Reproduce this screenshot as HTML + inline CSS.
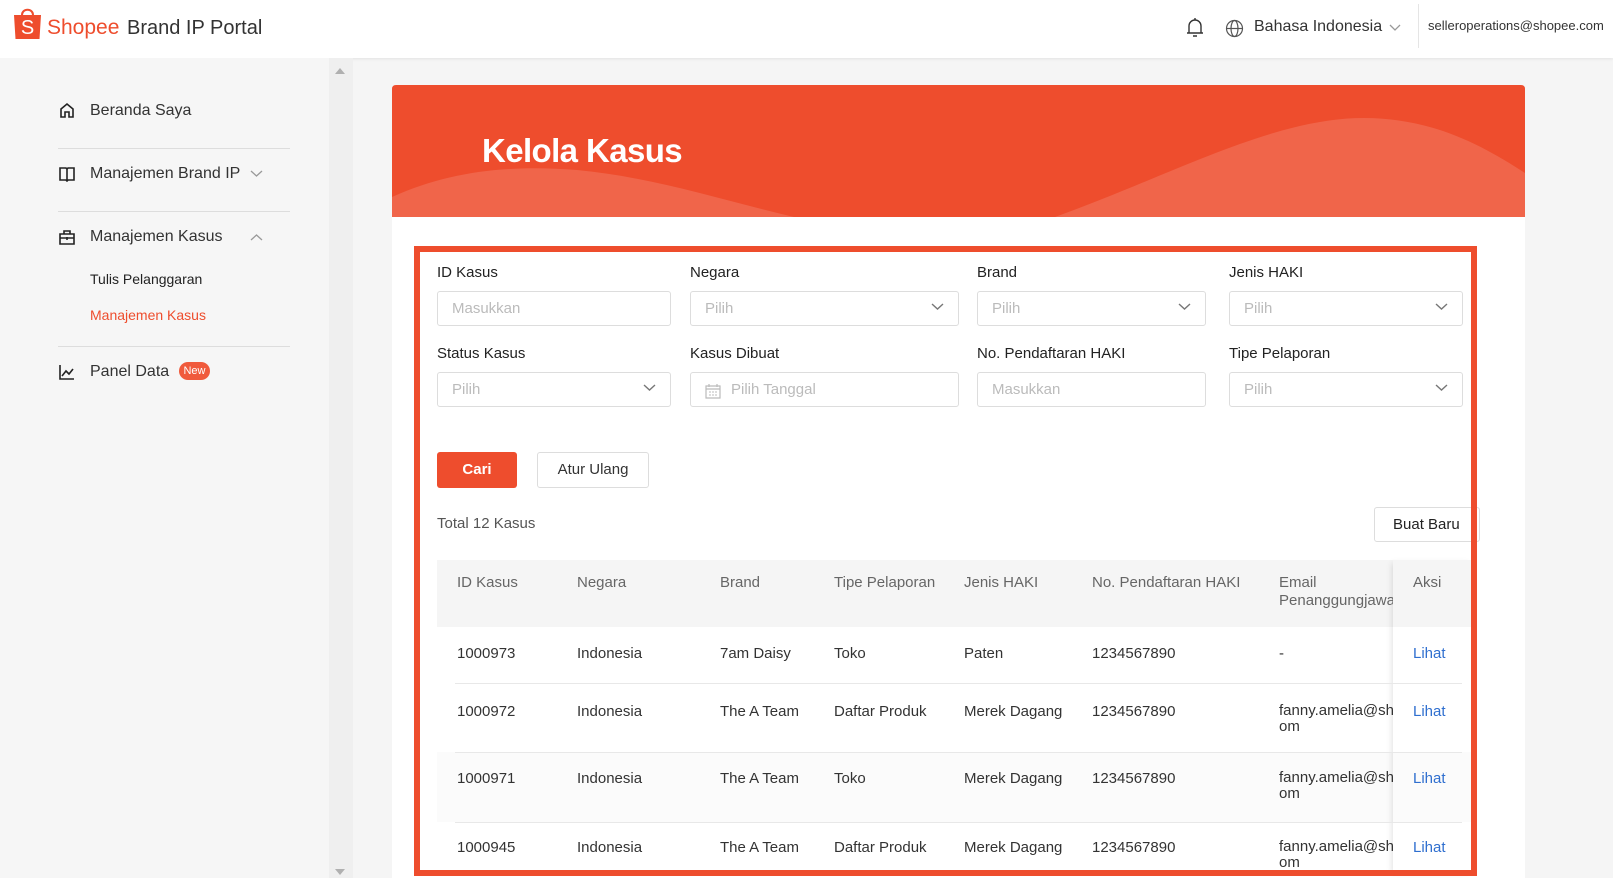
<!DOCTYPE html>
<html><head><meta charset="utf-8"><style>
*{margin:0;padding:0;box-sizing:border-box}
body{width:1613px;height:878px;overflow:hidden;background:#f5f5f5;font-family:"Liberation Sans",Arial,sans-serif;color:#333;position:relative}
.a{position:absolute;white-space:nowrap}
.hdr{left:0;top:0;width:1613px;height:58px;background:#fff;box-shadow:0 1px 3px rgba(0,0,0,.08)}
.side{left:0;top:58px;width:329px;height:820px;background:#f6f6f6}
.sb{left:329px;top:58px;width:24px;height:820px;background:#efefef}
.nav{font-size:16px;color:#333}
.hr{height:1px;background:#ddd;left:58px;width:232px}
.lbl{font-size:15px;color:#222}
.inp{border:1px solid #ddd;border-radius:3px;background:#fff;height:35px;font-size:15px;color:#bbb;padding:0 14px;line-height:33px}
.chev{position:absolute;right:14px;top:11px}
.th{font-size:15px;color:#666}
.td{font-size:15px;color:#333}
.rl{height:1px;background:#e8e8e8;left:455px;width:1007px}
.lk{font-size:15px;color:#2f6fcf}
</style></head><body>
<div class="a hdr"></div>
<svg class="a" style="left:13px;top:6px" width="29" height="34" viewBox="0 0 29 34"><path d="M9 9 C9 2 20 2 20 9" fill="none" stroke="#ee4d2d" stroke-width="2"/><path d="M1 9 H28 L26.5 33 H2.5 Z" fill="#ee4d2d"/><text x="14.5" y="28" text-anchor="middle" font-family="Liberation Sans" font-size="20" fill="#fff">S</text></svg>
<div class="a" style="left:47px;top:16px;font-size:21px;color:#ee4d2d">Shopee</div>
<div class="a" style="left:127px;top:17px;font-size:20px;color:#333">Brand IP Portal</div>
<svg class="a" style="left:1186px;top:17px" width="18" height="22" viewBox="0 0 18 22"><path d="M3 16 V9 A6 6 0 0 1 15 9 V16 H17 H1 Z M7 19 H11" fill="none" stroke="#333" stroke-width="1.4"/><path d="M9 1 V3" stroke="#333" stroke-width="1.4"/></svg>
<svg class="a" style="left:1225px;top:19px" width="19" height="19" viewBox="0 0 19 19"><g fill="none" stroke="#555" stroke-width="1.2"><circle cx="9.5" cy="9.5" r="8"/><ellipse cx="9.5" cy="9.5" rx="3.5" ry="8"/><path d="M1.5 9.5 H17.5"/></g></svg>
<div class="a" style="left:1254px;top:18px;font-size:16px;color:#333">Bahasa Indonesia</div>
<svg class="a" style="left:1389px;top:24px" width="12" height="8" viewBox="0 0 12 8"><path d="M1 1 L6 6 L11 1" fill="none" stroke="#999" stroke-width="1.3"/></svg>
<div class="a" style="left:1418px;top:4px;width:1px;height:44px;background:#e5e5e5"></div>
<div class="a" style="left:1428px;top:18px;font-size:13px;color:#333">selleroperations@shopee.com</div>

<div class="a side"></div>
<div class="a sb"></div>
<svg class="a" style="left:334px;top:67px" width="12" height="8"><path d="M1 7 L6 1 L11 7Z" fill="#b0b0b0"/></svg>
<svg class="a" style="left:334px;top:868px" width="12" height="8"><path d="M1 1 L6 7 L11 1Z" fill="#b0b0b0"/></svg>

<svg class="a" style="left:59px;top:102px" width="16" height="16" viewBox="0 0 16 16"><path d="M2 15 V7 L8 2 L14 7 V15 H10 V10 H6 V15 Z" fill="none" stroke="#222" stroke-width="1.6"/></svg>
<div class="a nav" style="left:90px;top:102px">Beranda Saya</div>
<div class="a hr" style="top:148px"></div>
<svg class="a" style="left:59px;top:166px" width="16" height="16" viewBox="0 0 16 16"><path d="M1 2 H7 L8 3 L9 2 H15 V14 H9 L8 15 L7 14 H1 Z M8 3 V14" fill="none" stroke="#222" stroke-width="1.6"/></svg>
<div class="a nav" style="left:90px;top:165px">Manajemen Brand IP</div>
<svg class="a" style="left:250px;top:170px" width="13" height="8"><path d="M1 1 L6.5 6 L12 1" fill="none" stroke="#999" stroke-width="1.3"/></svg>
<div class="a hr" style="top:211px"></div>
<svg class="a" style="left:59px;top:229px" width="16" height="16" viewBox="0 0 16 16"><path d="M1 5 H15 V15 H1 Z M5 5 V2 H11 V5 M1 9 H15 M8 8 V11" fill="none" stroke="#222" stroke-width="1.6"/></svg>
<div class="a nav" style="left:90px;top:228px">Manajemen Kasus</div>
<svg class="a" style="left:250px;top:233px" width="13" height="8"><path d="M1 7 L6.5 2 L12 7" fill="none" stroke="#999" stroke-width="1.3"/></svg>
<div class="a" style="left:90px;top:271px;font-size:14px;color:#222">Tulis Pelanggaran</div>
<div class="a" style="left:90px;top:307px;font-size:14px;color:#ee4d2d">Manajemen Kasus</div>
<div class="a hr" style="top:346px"></div>
<svg class="a" style="left:59px;top:364px" width="16" height="16" viewBox="0 0 16 16"><path d="M1 1 V15 H15 M3 12 L7 7 L10 10 L14 5" fill="none" stroke="#222" stroke-width="1.6"/></svg>
<div class="a nav" style="left:90px;top:363px">Panel Data</div>
<div class="a" style="left:179px;top:362px;width:31px;height:18px;border-radius:9px;background:#f05a3c;color:#fff;font-size:11px;line-height:18px;text-align:center">New</div>

<div class="a" style="left:392px;top:85px;width:1133px;height:793px;background:#fff;border-radius:4px 4px 0 0"></div>
<svg class="a" style="left:392px;top:85px" width="1133" height="132" viewBox="0 0 1133 132"><path d="M4 0 H1129 Q1133 0 1133 4 V132 H0 V4 Q0 0 4 0Z" fill="#ee4d2d"/><path d="M0 112 C60 85 120 80 185 85 C260 92 330 115 402 132 H0Z" fill="#f0654a"/><path d="M663 132 C780 90 880 33 972 33 C1040 33 1090 60 1133 88 V132Z" fill="#f0654a"/></svg>
<div class="a" style="left:482px;top:132px;font-size:33px;font-weight:bold;color:#fff;letter-spacing:-0.6px">Kelola Kasus</div>

<div class="a lbl" style="left:437px;top:264px">ID Kasus</div>
<div class="a lbl" style="left:690px;top:264px">Negara</div>
<div class="a lbl" style="left:977px;top:264px">Brand</div>
<div class="a lbl" style="left:1229px;top:264px">Jenis HAKI</div>
<div class="a inp" style="left:437px;top:291px;width:234px">Masukkan</div>
<div class="a inp" style="left:690px;top:291px;width:269px">Pilih<svg class="chev" width="13" height="8"><path d="M1 1 L6.5 6 L12 1" fill="none" stroke="#777" stroke-width="1.4"/></svg></div>
<div class="a inp" style="left:977px;top:291px;width:229px">Pilih<svg class="chev" width="13" height="8"><path d="M1 1 L6.5 6 L12 1" fill="none" stroke="#777" stroke-width="1.4"/></svg></div>
<div class="a inp" style="left:1229px;top:291px;width:234px">Pilih<svg class="chev" width="13" height="8"><path d="M1 1 L6.5 6 L12 1" fill="none" stroke="#777" stroke-width="1.4"/></svg></div>

<div class="a lbl" style="left:437px;top:345px">Status Kasus</div>
<div class="a lbl" style="left:690px;top:345px">Kasus Dibuat</div>
<div class="a lbl" style="left:977px;top:345px">No. Pendaftaran HAKI</div>
<div class="a lbl" style="left:1229px;top:345px">Tipe Pelaporan</div>
<div class="a inp" style="left:437px;top:372px;width:234px">Pilih<svg class="chev" width="13" height="8"><path d="M1 1 L6.5 6 L12 1" fill="none" stroke="#777" stroke-width="1.4"/></svg></div>
<div class="a inp" style="left:690px;top:372px;width:269px;padding-left:40px">Pilih Tanggal<svg style="position:absolute;left:14px;top:10px" width="16" height="16" viewBox="0 0 16 16"><path d="M1 3 H15 V15 H1 Z M1 6 H15 M4 1 V4 M12 1 V4" fill="none" stroke="#bbb" stroke-width="1.2"/><path d="M4 9h2M7 9h2M10 9h2M4 12h2M7 12h2M10 12h2" stroke="#bbb"/></svg></div>
<div class="a inp" style="left:977px;top:372px;width:229px">Masukkan</div>
<div class="a inp" style="left:1229px;top:372px;width:234px">Pilih<svg class="chev" width="13" height="8"><path d="M1 1 L6.5 6 L12 1" fill="none" stroke="#777" stroke-width="1.4"/></svg></div>

<div class="a" style="left:437px;top:452px;width:80px;height:36px;background:#ee4d2d;border-radius:3px;color:#fff;font-size:15px;font-weight:bold;text-align:center;line-height:36px">Cari</div>
<div class="a" style="left:537px;top:452px;width:112px;height:36px;border:1px solid #ddd;border-radius:3px;background:#fff;color:#333;font-size:15px;text-align:center;line-height:34px">Atur Ulang</div>
<div class="a" style="left:437px;top:515px;font-size:15px;color:#555">Total 12 Kasus</div>
<div class="a" style="left:1374px;top:507px;width:106px;height:35px;border:1px solid #ddd;border-radius:3px;background:#fff;color:#222;font-size:15px;line-height:33px;padding-left:18px">Buat Baru</div>

<div class="a" style="left:437px;top:560px;width:1038px;height:67px;background:#f5f5f5"></div>
<div class="a" style="left:437px;top:752px;width:1038px;height:70px;background:#fbfbfb"></div>
<div class="a" style="left:1393px;top:560px;width:82px;height:316px;box-shadow:-4px 0 6px -3px rgba(0,0,0,.12);background:transparent"></div>
<div class="a th" style="left:457px;top:574px">ID Kasus</div>
<div class="a th" style="left:577px;top:574px">Negara</div>
<div class="a th" style="left:720px;top:574px">Brand</div>
<div class="a th" style="left:834px;top:574px">Tipe Pelaporan</div>
<div class="a th" style="left:964px;top:574px">Jenis HAKI</div>
<div class="a th" style="left:1092px;top:574px">No. Pendaftaran HAKI</div>
<div class="a th" style="left:1279px;top:574px;width:114px;overflow:hidden;line-height:18px">Email<br>Penanggungjawab</div>
<div class="a th" style="left:1413px;top:574px">Aksi</div>

<div class="a rl" style="top:683px"></div>
<div class="a rl" style="top:752px"></div>
<div class="a rl" style="top:822px"></div>

<div class="a td" style="left:457px;top:645px">1000973</div><div class="a td" style="left:577px;top:645px">Indonesia</div><div class="a td" style="left:720px;top:645px">7am Daisy</div><div class="a td" style="left:834px;top:645px">Toko</div><div class="a td" style="left:964px;top:645px">Paten</div><div class="a td" style="left:1092px;top:645px">1234567890</div><div class="a td" style="left:1279px;top:645px">-</div><div class="a lk" style="left:1413px;top:645px">Lihat</div>

<div class="a td" style="left:457px;top:703px">1000972</div><div class="a td" style="left:577px;top:703px">Indonesia</div><div class="a td" style="left:720px;top:703px">The A Team</div><div class="a td" style="left:834px;top:703px">Daftar Produk</div><div class="a td" style="left:964px;top:703px">Merek Dagang</div><div class="a td" style="left:1092px;top:703px">1234567890</div><div class="a td" style="left:1279px;top:703px;width:114px;overflow:hidden;line-height:16px">fanny.amelia@shopee.c<br>om</div><div class="a lk" style="left:1413px;top:703px">Lihat</div>

<div class="a td" style="left:457px;top:770px">1000971</div><div class="a td" style="left:577px;top:770px">Indonesia</div><div class="a td" style="left:720px;top:770px">The A Team</div><div class="a td" style="left:834px;top:770px">Toko</div><div class="a td" style="left:964px;top:770px">Merek Dagang</div><div class="a td" style="left:1092px;top:770px">1234567890</div><div class="a td" style="left:1279px;top:770px;width:114px;overflow:hidden;line-height:16px">fanny.amelia@shopee.c<br>om</div><div class="a lk" style="left:1413px;top:770px">Lihat</div>

<div class="a td" style="left:457px;top:839px">1000945</div><div class="a td" style="left:577px;top:839px">Indonesia</div><div class="a td" style="left:720px;top:839px">The A Team</div><div class="a td" style="left:834px;top:839px">Daftar Produk</div><div class="a td" style="left:964px;top:839px">Merek Dagang</div><div class="a td" style="left:1092px;top:839px">1234567890</div><div class="a td" style="left:1279px;top:839px;width:114px;overflow:hidden;line-height:16px">fanny.amelia@shopee.c<br>om</div><div class="a lk" style="left:1413px;top:839px">Lihat</div>

<div class="a" style="left:414px;top:246px;width:1063px;height:630px;border:6px solid #ee4d2d"></div>
</body></html>
